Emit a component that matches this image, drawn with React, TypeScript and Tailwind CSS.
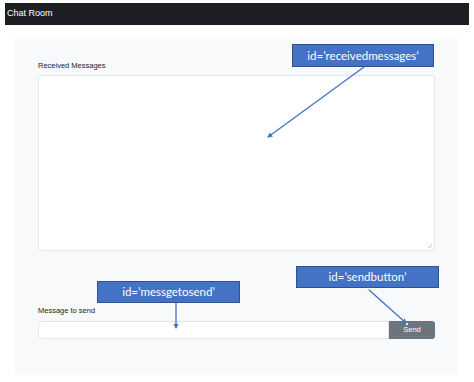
import React from "react";

const Box = ({ className, children }: { className: string; children: React.ReactNode }) => (
  <div
    className={
      "absolute flex items-center justify-center bg-[#4472c4] border border-[#2f528f] text-white text-[11.5px] font-['Lato','Open_Sans',sans-serif] " +
      className
    }
  >
    {children}
  </div>
);

export default function App() {
  return (
    <div className="relative w-[474px] h-[382px] bg-white font-['Liberation_Sans',Arial,sans-serif] overflow-hidden">
      <div className="mx-[5px] mt-[3px] h-[22px] bg-[#1e1f24] text-white text-[9px] flex items-center px-[2px] pb-[1px]">
        Chat Room
      </div>
      <div className="ml-[15px] mt-[12px] w-[443px] h-[338px] bg-[#f8f9fa] px-[23px] pt-[24px]">
        <div className="text-[7.5px] text-[#212529] leading-[10px] mb-[4px]">Received Messages</div>
        <div className="relative h-[176px] bg-white border border-[#e3e6ea] rounded-[3px]">
          <svg className="absolute right-[1px] bottom-[1px]" width="6" height="6" viewBox="0 0 6 6">
            <line x1="1" y1="5" x2="5" y2="1" stroke="#aaa" strokeWidth="0.7" />
            <line x1="3.5" y1="5" x2="5" y2="3.5" stroke="#aaa" strokeWidth="0.7" />
          </svg>
        </div>
        <div className="mt-[55px] text-[7.5px] text-[#212529] leading-[10px]">Message to send</div>
        <div className="mt-[5px] flex h-[18px]">
          <div className="flex-1 bg-white border border-[#e3e6ea] rounded-l-[3px]" />
          <div className="w-[46px] bg-[#6c757d] rounded-r-[3px] text-white text-[7.5px] flex items-center justify-center">
            Send
          </div>
        </div>
      </div>

      <Box className="left-[292px] top-[44px] w-[142px] h-[23px]">id=’receivedmessages’</Box>
      <Box className="left-[97px] top-[281px] w-[143px] h-[22px]">id=’messgetosend’</Box>
      <Box className="left-[296px] top-[266px] w-[143px] h-[22px]">id=’sendbutton’</Box>

      <svg className="absolute inset-0 pointer-events-none" width="474" height="382">
        <defs>
          <marker id="ah" viewBox="0 0 10 10" refX="8" refY="5" markerWidth="4" markerHeight="4" orient="auto-start-reverse">
            <path d="M0 0 L10 5 L0 10 z" fill="#4472c4" />
          </marker>
        </defs>
        <line x1="364" y1="67" x2="268" y2="137" stroke="#4472c4" strokeWidth="1.3" markerEnd="url(#ah)" />
        <line x1="176" y1="303" x2="176" y2="328" stroke="#4472c4" strokeWidth="1.3" markerEnd="url(#ah)" />
        <line x1="368" y1="289" x2="406" y2="323" stroke="#4472c4" strokeWidth="1.3" markerEnd="url(#ah)" />
        <circle cx="368" cy="289" r="1.2" fill="#f3f0c0" />
        <circle cx="407" cy="324" r="1.2" fill="#f3f0c0" />
      </svg>
    </div>
  );
}
